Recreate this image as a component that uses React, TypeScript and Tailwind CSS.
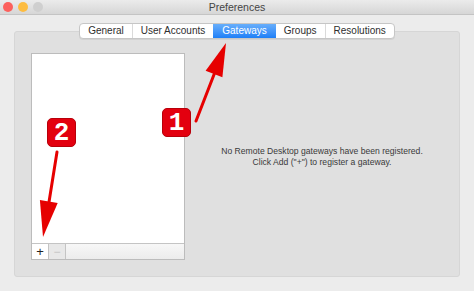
import React from "react";

const tabs = ["General", "User Accounts", "Gateways", "Groups", "Resolutions"];

function Badge({ n, className }: { n: string; className: string }) {
  return (
    <div
      className={`absolute w-[29px] h-[29px] rounded-[5px] bg-[#e3000f] border border-[#b8000a] flex items-center justify-center text-white font-bold text-[26px] leading-none font-['Liberation_Mono',monospace] ${className}`}
    >
      {n}
    </div>
  );
}

export default function App() {
  return (
    <div className="relative w-[474px] h-[291px] overflow-hidden bg-[#ececec] font-['Liberation_Sans',Arial,sans-serif]">
      {/* title bar */}
      <div className="grid grid-cols-[1fr_auto_1fr] items-center h-[15px] bg-gradient-to-b from-[#ebebeb] to-[#d6d6d6] border-b border-[#c4c4c4]">
        <div className="flex items-center gap-[5px] pl-[3px]">
          <span className="w-[10px] h-[10px] rounded-full bg-[#fc605c]" />
          <span className="w-[10px] h-[10px] rounded-full bg-[#fdbc40]" />
          <span className="w-[10px] h-[10px] rounded-full bg-[#cfcfcf]" />
        </div>
        <div className="text-[10.5px] text-[#444] leading-none">Preferences</div>
        <div />
      </div>

      {/* body */}
      <div className="px-[14px]">
        <div className="relative z-10 flex justify-center mt-[8px] -mb-[8px]">
          <div className="flex h-[16px] rounded-[4px] border border-[#c6c6c6] bg-white overflow-hidden shadow-[0_1px_0_rgba(0,0,0,0.06)]">
            {tabs.map((t, i) => (
              <div
                key={t}
                className={`flex items-center text-[10px] leading-none ${
                  t === "Gateways"
                    ? "bg-gradient-to-b from-[#67aefb] to-[#1c7ff7] text-white px-[9px]"
                    : "text-[#2e2e2e] px-[8px]"
                } ${i > 0 && t !== "Gateways" && tabs[i - 1] !== "Gateways" ? "border-l border-[#dadada]" : ""}`}
              >
                {t}
              </div>
            ))}
          </div>
        </div>

        <div className="h-[246px] rounded-[3px] border border-[#d6d6d6] bg-[#e0e0e0] flex pl-[16px] pt-[21px]">
          <div className="w-[154px] h-[207px] flex flex-col border border-[#bcbcbc] bg-white">
            <div className="flex-1" />
            <div className="h-[16px] flex border-t border-[#c4c4c4] bg-gradient-to-b from-[#f7f7f7] to-[#ececec]">
              <div className="w-[17px] flex items-center justify-center bg-white border-r border-[#c4c4c4] text-[#222] text-[13px] leading-none">
                +
              </div>
              <div className="w-[17px] flex items-center justify-center bg-[#e8e8e8] border-r border-[#c4c4c4] text-[#c4c4c4] text-[12px] leading-none">
                −
              </div>
              <div className="flex-1" />
            </div>
          </div>
          <div className="flex-1 flex flex-col items-center justify-center pb-[15px] text-[8.6px] leading-[11px] text-[#3a3a3a] text-center">
            <div>No Remote Desktop gateways have been registered.</div>
            <div>Click Add ("+") to register a gateway.</div>
          </div>
        </div>
      </div>

      {/* annotations */}
      <svg className="absolute inset-0 pointer-events-none" width="474" height="291" viewBox="0 0 474 291">
        <line x1="196" y1="121" x2="215" y2="72" stroke="#e60000" strokeWidth="3" strokeLinecap="round" />
        <polygon points="226,43 205.6,70.8 222.4,77.2" fill="#e60000" />
        <line x1="57" y1="152" x2="49" y2="202" stroke="#e60000" strokeWidth="3" strokeLinecap="round" />
        <polygon points="43,237 39.9,200 57.7,203" fill="#e60000" />
      </svg>
      <Badge n="1" className="left-[162px] top-[108px]" />
      <Badge n="2" className="left-[47px] top-[118px]" />
    </div>
  );
}
